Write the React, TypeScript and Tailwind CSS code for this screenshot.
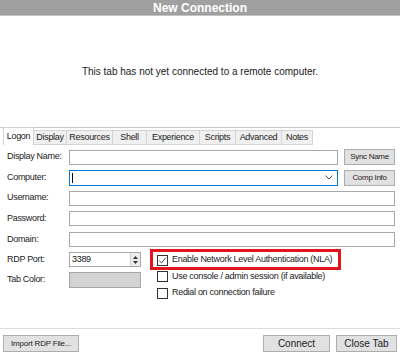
import React from "react";

const ui = "font-['Liberation_Sans',Arial,sans-serif]";

const tabs = [
  { name: "Logon", w: 31 },
  { name: "Display", w: 33 },
  { name: "Resources", w: 46 },
  { name: "Shell", w: 34 },
  { name: "Experience", w: 53 },
  { name: "Scripts", w: 36 },
  { name: "Advanced", w: 46 },
  { name: "Notes", w: 31 },
];

function Label({ children }: { children: React.ReactNode }) {
  return (
    <div className="w-[62px] shrink-0 text-[9px] tracking-[-0.3px] text-[#222]">
      {children}
    </div>
  );
}

function Field({ className = "" }: { className?: string }) {
  return <div className={"h-[15px] border border-[#a8a8a8] bg-white " + className} />;
}

function SmallButton({ children }: { children: React.ReactNode }) {
  return (
    <div className="ml-[6px] flex h-[16px] w-[51px] shrink-0 items-center justify-center border border-[#adadad] bg-[#e1e1e1] text-[8px] tracking-[-0.3px] text-[#222]">
      {children}
    </div>
  );
}

function Check({ checked, label }: { checked?: boolean; label: string }) {
  return (
    <div className="flex h-[16.5px] items-center">
      <div className="flex h-[11px] w-[11px] items-center justify-center border border-[#333] bg-white">
        {checked && (
          <svg width="9" height="9" viewBox="0 0 9 9">
            <path d="M1.2 4.6 L3.5 6.9 L7.8 1.6" fill="none" stroke="#444" strokeWidth="1" />
          </svg>
        )}
      </div>
      <span className="ml-[4px] text-[9px] tracking-[-0.3px] text-[#222]">{label}</span>
    </div>
  );
}

export default function App() {
  return (
    <div className={"h-[352px] w-[400px] overflow-hidden bg-white " + ui}>
      {/* Title bar */}
      <div className="flex h-[16px] items-center justify-center border-b border-[#c4c4c4] bg-[#a0a0a0] text-[12px] font-bold text-white">
        New Connection
      </div>

      {/* Empty tab message */}
      <div className="flex h-[111px] items-center justify-center text-[10px] text-[#1a1a1a]">
        This tab has not yet connected to a remote computer.
      </div>

      {/* Tab strip */}
      <div className="flex h-[18px] items-end border-t border-[#c8c8c8] pl-[3px]">
        {tabs.map((t, i) =>
          i === 0 ? (
            <div
              key={t.name}
              style={{ width: t.w }}
              className="flex h-[18px] items-center justify-center border border-b-0 border-[#d4d4d4] bg-white text-[9px] tracking-[-0.3px] text-[#222]"
            >
              {t.name}
            </div>
          ) : (
            <div
              key={t.name}
              style={{ width: t.w }}
              className="flex h-[15px] items-center justify-center border border-l-0 border-[#d4d4d4] bg-[#f0f0f0] text-[9px] tracking-[-0.3px] text-[#222]"
            >
              {t.name}
            </div>
          )
        )}
      </div>

      {/* Logon form */}
      <div className="flex flex-col gap-[4.6px] pl-[7px] pr-[5px] pt-[4px]">
        <div className="flex h-[16px] items-center">
          <Label>Display Name:</Label>
          <Field className="flex-1" />
          <SmallButton>Sync Name</SmallButton>
        </div>
        <div className="flex h-[16px] items-center">
          <Label>Computer:</Label>
          <div className="flex h-[16px] flex-1 items-center border border-[#0078d7] bg-white pl-[2px] pr-[4px]">
            <div className="h-[10px] w-px bg-black" />
            <div className="flex-1" />
            <svg width="8" height="5" viewBox="0 0 8 5">
              <path d="M0.5 0.5 L4 4 L7.5 0.5" fill="none" stroke="#555" strokeWidth="1" />
            </svg>
          </div>
          <SmallButton>Comp Info</SmallButton>
        </div>
        <div className="flex h-[16px] items-center">
          <Label>Username:</Label>
          <Field className="flex-1" />
        </div>
        <div className="flex h-[16px] items-center">
          <Label>Password:</Label>
          <Field className="flex-1" />
        </div>
        <div className="flex h-[16px] items-center">
          <Label>Domain:</Label>
          <Field className="flex-1" />
        </div>

        <div className="flex">
          <div className="flex w-[134px] flex-col gap-[4px]">
            <div className="flex h-[16px] items-center">
              <Label>RDP Port:</Label>
              <div className="flex h-[15px] w-[72px] items-center border border-[#a8a8a8] bg-white pl-[2px]">
                <span className="flex-1 text-[9px] tracking-[-0.3px] text-[#111]">3389</span>
                <div className="flex h-full w-[10px] flex-col items-center justify-center gap-[2px] border-l border-[#d0d0d0] bg-[#ececec]">
                  <svg width="5" height="3" viewBox="0 0 5 3">
                    <path d="M0 3 L2.5 0 L5 3 Z" fill="#333" />
                  </svg>
                  <svg width="5" height="3" viewBox="0 0 5 3">
                    <path d="M0 0 L2.5 3 L5 0 Z" fill="#333" />
                  </svg>
                </div>
              </div>
            </div>
            <div className="flex h-[16px] items-center">
              <Label>Tab Color:</Label>
              <div className="h-[16px] w-[72px] border border-[#a8a8a8] bg-[#d3d3d3]" />
            </div>
          </div>

          <div className="ml-[16px] flex flex-col">
            <div className="relative">
              <Check checked label="Enable Network Level Authentication (NLA)" />
              <div className="absolute -left-[7px] -top-[3px] h-[21px] w-[191px] border-[3px] border-[#e3141c]" />
            </div>
            <Check label="Use console / admin session (if available)" />
            <Check label="Redial on connection failure" />
          </div>
        </div>
      </div>

      {/* Footer */}
      <div className="mt-[27px] border-t border-[#dcdcdc] pt-[6px]">
        <div className="flex items-start pl-[3px] pr-[3px]">
          <div className="flex h-[17px] w-[76px] items-center justify-center border border-[#adadad] bg-[#e1e1e1] text-[8px] tracking-[-0.2px] text-[#222]">
            Import RDP File...
          </div>
          <div className="flex-1" />
          <div className="flex h-[17px] w-[67px] items-center justify-center border border-[#adadad] bg-[#e1e1e1] text-[10px] text-[#222]">
            Connect
          </div>
          <div className="ml-[6px] flex h-[17px] w-[61px] items-center justify-center border border-[#adadad] bg-[#e1e1e1] text-[10px] text-[#222]">
            Close Tab
          </div>
        </div>
      </div>
    </div>
  );
}
